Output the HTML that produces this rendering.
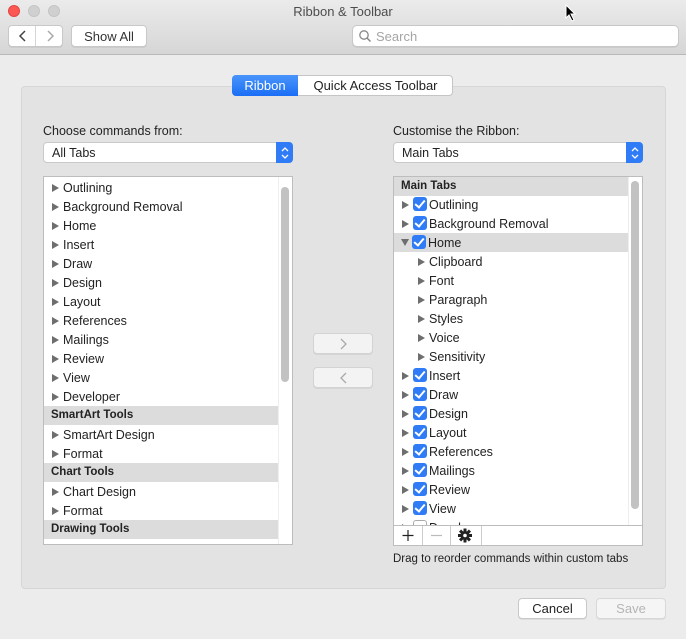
<!DOCTYPE html>
<html><head><style>
*{box-sizing:border-box;margin:0;padding:0}
body{width:686px;height:639px;background:#ececec;font-family:"Liberation Sans",sans-serif;font-size:12.5px;color:#222;position:relative;overflow:hidden}
.a{position:absolute}
.tb{left:0;top:0;width:686px;height:55px;background:linear-gradient(#ebebeb,#d6d6d6);border-bottom:1px solid #b9b9b9}
.dot{width:12px;height:12px;border-radius:50%;top:5px;background:#d0d0d0;border:1px solid #c4c4c4}
.btn{background:#fff;border:1px solid #c8c8c8;border-radius:4px;box-shadow:0 1px 0 rgba(0,0,0,.06);text-align:center}
.grp{left:21px;top:86px;width:645px;height:503px;background:#e3e3e3;border:1px solid #d6d6d6;border-radius:4px}
.pop{background:#fff;border:1px solid #c9c9c9;border-radius:4px;height:21px;padding-left:8px;line-height:21px}
.arr{position:absolute;right:-1px;top:-1px;width:17px;height:21px;background:#2f7cf6;border-radius:0 4px 4px 0}
.list{background:#fff;border:1px solid #bdbdbd;overflow:hidden}
.r{position:absolute;left:0;height:19px;line-height:21px;width:234px;white-space:nowrap}
.h{background:#dcdcdc;font-weight:bold;font-size:11.5px;padding-left:7px;line-height:19px}
.t{display:inline-block;width:0;height:0;border-left:7px solid #6e6e6e;border-top:4px solid transparent;border-bottom:4px solid transparent;margin:0 4px 0 0;vertical-align:0}
.td{display:inline-block;width:0;height:0;border-top:7px solid #6e6e6e;border-left:4px solid transparent;border-right:4px solid transparent;margin:0 3px 0 -1px;vertical-align:1px}
.cb{display:inline-block;width:14px;height:14px;background:#2f7cf6;border-radius:3px;margin-right:2px;vertical-align:-2px;position:relative}
.cb:after{content:"";position:absolute;left:4px;top:1px;width:4px;height:8px;border:solid #fff;border-width:0 2px 2px 0;transform:rotate(40deg)}
.sb{position:absolute;width:8px;border-radius:4px;background:#c2c2c2}
</style></head><body>
<div class="a tb"></div>
<div class="a dot" style="left:8px;background:#fc5753;border-color:#df4744"></div>
<div class="a dot" style="left:28px"></div>
<div class="a dot" style="left:48px"></div>
<div class="a" style="left:0;width:686px;top:4px;text-align:center;color:#4d4d4d;font-size:13px">Ribbon &amp; Toolbar</div>
<svg class="a" style="left:565px;top:4px" width="12" height="18"><path d="M1 1 L1 14 L4 11 L7 17 L9 16 L6 10 L10 10 Z" fill="#000" stroke="#fff" stroke-width="1"/></svg>
<div class="a btn" style="left:8px;top:25px;width:55px;height:22px"></div>
<div class="a" style="left:35px;top:26px;width:1px;height:20px;background:#d6d6d6"></div>
<svg class="a" style="left:8px;top:25px" width="55" height="22"><path d="M17 6 L12 11 L17 16" stroke="#444" stroke-width="1.5" fill="none"/><path d="M46 6 L51 11 L46 16" stroke="#aaa" stroke-width="1.5" fill="none" transform="translate(-6,0)"/></svg>
<div class="a btn" style="left:71px;top:25px;width:76px;height:22px;line-height:21px;font-size:13px;color:#333">Show All</div>
<div class="a btn" style="left:352px;top:25px;width:327px;height:22px;border-radius:5px"></div>
<svg class="a" style="left:358px;top:29px" width="14" height="14"><circle cx="6" cy="6" r="4.2" stroke="#888" stroke-width="1.3" fill="none"/><path d="M9 9 L12.5 12.5" stroke="#888" stroke-width="1.5"/></svg>
<div class="a" style="left:376px;top:29px;color:#a5a5a5;font-size:13px">Search</div>

<div class="a grp"></div>
<div class="a" style="left:232px;top:75px;width:221px;height:21px;border:1px solid #c5c5c5;border-radius:4px;background:#fff"></div>
<div class="a" style="left:232px;top:75px;width:66px;height:21px;background:linear-gradient(#4a95fb,#1a6ef5);border-radius:4px 0 0 4px;color:#fff;text-align:center;line-height:21px;font-size:13px">Ribbon</div>
<div class="a" style="left:298px;top:75px;width:155px;height:21px;text-align:center;line-height:21px;font-size:13px">Quick Access Toolbar</div>

<div class="a" style="left:43px;top:124px">Choose commands from:</div>
<div class="a pop" style="left:43px;top:142px;width:250px">All Tabs<div class="arr"></div></div>
<svg class="a" style="left:277px;top:143px" width="16" height="20"><path d="M5 8 L8 5 L11 8 M5 12 L8 15 L11 12" stroke="#fff" stroke-width="1.3" fill="none"/></svg>
<div class="a list" style="left:43px;top:176px;width:250px;height:369px">
<div style="position:absolute;left:234px;top:0;width:1px;height:369px;background:#eee"></div>
<div class="sb" style="left:237px;top:10px;height:195px"></div>
<div class="r" style="top:1px;padding-left:8px"><i class="t"></i>Outlining</div>
<div class="r" style="top:20px;padding-left:8px"><i class="t"></i>Background Removal</div>
<div class="r" style="top:39px;padding-left:8px"><i class="t"></i>Home</div>
<div class="r" style="top:58px;padding-left:8px"><i class="t"></i>Insert</div>
<div class="r" style="top:77px;padding-left:8px"><i class="t"></i>Draw</div>
<div class="r" style="top:96px;padding-left:8px"><i class="t"></i>Design</div>
<div class="r" style="top:115px;padding-left:8px"><i class="t"></i>Layout</div>
<div class="r" style="top:134px;padding-left:8px"><i class="t"></i>References</div>
<div class="r" style="top:153px;padding-left:8px"><i class="t"></i>Mailings</div>
<div class="r" style="top:172px;padding-left:8px"><i class="t"></i>Review</div>
<div class="r" style="top:191px;padding-left:8px"><i class="t"></i>View</div>
<div class="r" style="top:210px;padding-left:8px"><i class="t"></i>Developer</div>
<div class="r h" style="top:229px">SmartArt Tools</div>
<div class="r" style="top:248px;padding-left:8px"><i class="t"></i>SmartArt Design</div>
<div class="r" style="top:267px;padding-left:8px"><i class="t"></i>Format</div>
<div class="r h" style="top:286px">Chart Tools</div>
<div class="r" style="top:305px;padding-left:8px"><i class="t"></i>Chart Design</div>
<div class="r" style="top:324px;padding-left:8px"><i class="t"></i>Format</div>
<div class="r h" style="top:343px">Drawing Tools</div>
</div>

<div class="a btn" style="left:313px;top:333px;width:60px;height:21px;border-color:#d3d3d3;background:#f3f3f3"></div>
<div class="a btn" style="left:313px;top:367px;width:60px;height:21px;border-color:#d3d3d3;background:#f3f3f3"></div>
<svg class="a" style="left:313px;top:333px" width="60" height="56"><path d="M28 6 L33 11 L28 16" stroke="#aaa" stroke-width="1.3" fill="none"/><path d="M33 40 L28 45 L33 50" stroke="#aaa" stroke-width="1.3" fill="none"/></svg>

<div class="a" style="left:393px;top:124px">Customise the Ribbon:</div>
<div class="a pop" style="left:393px;top:142px;width:250px">Main Tabs<div class="arr"></div></div>
<svg class="a" style="left:627px;top:143px" width="16" height="20"><path d="M5 8 L8 5 L11 8 M5 12 L8 15 L11 12" stroke="#fff" stroke-width="1.3" fill="none"/></svg>
<div class="a list" style="left:393px;top:176px;width:250px;height:370px">
<div style="position:absolute;left:234px;top:0;width:1px;height:350px;background:#eee"></div>
<div class="sb" style="left:237px;top:4px;height:328px"></div>
<div class="r h" style="top:0">Main Tabs</div>
<div class="r" style="top:18px;padding-left:8px"><i class="t"></i><span class="cb"></span>Outlining</div>
<div class="r" style="top:37px;padding-left:8px"><i class="t"></i><span class="cb"></span>Background Removal</div>
<div class="r" style="top:56px;padding-left:8px;background:#dcdcdc"><i class="td"></i><span class="cb"></span>Home</div>
<div class="r" style="top:75px;padding-left:24px"><i class="t"></i>Clipboard</div>
<div class="r" style="top:94px;padding-left:24px"><i class="t"></i>Font</div>
<div class="r" style="top:113px;padding-left:24px"><i class="t"></i>Paragraph</div>
<div class="r" style="top:132px;padding-left:24px"><i class="t"></i>Styles</div>
<div class="r" style="top:151px;padding-left:24px"><i class="t"></i>Voice</div>
<div class="r" style="top:170px;padding-left:24px"><i class="t"></i>Sensitivity</div>
<div class="r" style="top:189px;padding-left:8px"><i class="t"></i><span class="cb"></span>Insert</div>
<div class="r" style="top:208px;padding-left:8px"><i class="t"></i><span class="cb"></span>Draw</div>
<div class="r" style="top:227px;padding-left:8px"><i class="t"></i><span class="cb"></span>Design</div>
<div class="r" style="top:246px;padding-left:8px"><i class="t"></i><span class="cb"></span>Layout</div>
<div class="r" style="top:265px;padding-left:8px"><i class="t"></i><span class="cb"></span>References</div>
<div class="r" style="top:284px;padding-left:8px"><i class="t"></i><span class="cb"></span>Mailings</div>
<div class="r" style="top:303px;padding-left:8px"><i class="t"></i><span class="cb"></span>Review</div>
<div class="r" style="top:322px;padding-left:8px"><i class="t"></i><span class="cb"></span>View</div>
<div class="r" style="top:341px;padding-left:8px"><i class="t"></i><span class="cb" style="background:#fff;border:1px solid #aaa"></span>Developer</div>
<div style="position:absolute;left:0;top:348px;width:248px;height:20px;border-top:1px solid #bdbdbd;background:#fff"></div>
<div style="position:absolute;left:28px;top:349px;width:1px;height:19px;background:#ccc"></div>
<div style="position:absolute;left:56px;top:349px;width:1px;height:19px;background:#ccc"></div>
<div style="position:absolute;left:87px;top:349px;width:1px;height:19px;background:#ccc"></div>
<svg style="position:absolute;left:0;top:349px" width="90" height="19"><path d="M14 4 V15 M8.5 9.5 H19.5" stroke="#222" stroke-width="1.2"/><path d="M37 9.5 H48" stroke="#bbb" stroke-width="1.2"/><g transform="translate(71,9.5)" fill="#222"><circle r="4.5"/><rect x="-1.5" y="-7" width="3" height="14"/><rect x="-1.5" y="-7" width="3" height="14" transform="rotate(45)"/><rect x="-1.5" y="-7" width="3" height="14" transform="rotate(90)"/><rect x="-1.5" y="-7" width="3" height="14" transform="rotate(135)"/><circle r="1.8" fill="#fff"/></g></svg>
</div>
<div class="a" style="left:393px;top:553px;font-size:11.5px">Drag to reorder commands within custom tabs</div>

<div class="a btn" style="left:518px;top:598px;width:69px;height:21px;line-height:20px;font-size:13px">Cancel</div>
<div class="a btn" style="left:596px;top:598px;width:70px;height:21px;line-height:20px;font-size:13px;color:#b5b5b5;background:#f5f5f5;border-color:#d8d8d8">Save</div>
</body></html>
